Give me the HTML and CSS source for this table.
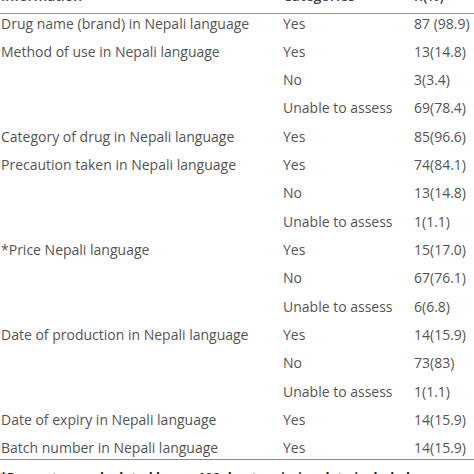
FILE: index.html
```html
<!DOCTYPE html>
<html>
<head>
<meta charset="utf-8">
<link rel="stylesheet" href="styles.css">
</head>
<body>
<div class="table">
  <div class="row head"><div class="c1">Information</div><div class="c2">Categories</div><div class="c3">n(%)</div></div>
  <div class="row"><div class="c1">Drug name (brand) in Nepali language</div><div class="c2">Yes</div><div class="c3">87 (98.9)</div></div>
  <div class="row"><div class="c1">Method of use in Nepali language</div><div class="c2">Yes</div><div class="c3">13(14.8)</div></div>
  <div class="row"><div class="c1"></div><div class="c2">No</div><div class="c3">3(3.4)</div></div>
  <div class="row"><div class="c1"></div><div class="c2">Unable to assess</div><div class="c3">69(78.4)</div></div>
  <div class="row"><div class="c1">Category of drug in Nepali language</div><div class="c2">Yes</div><div class="c3">85(96.6)</div></div>
  <div class="row"><div class="c1">Precaution taken in Nepali language</div><div class="c2">Yes</div><div class="c3">74(84.1)</div></div>
  <div class="row"><div class="c1"></div><div class="c2">No</div><div class="c3">13(14.8)</div></div>
  <div class="row"><div class="c1"></div><div class="c2">Unable to assess</div><div class="c3">1(1.1)</div></div>
  <div class="row"><div class="c1">*Price Nepali language</div><div class="c2">Yes</div><div class="c3">15(17.0)</div></div>
  <div class="row"><div class="c1"></div><div class="c2">No</div><div class="c3">67(76.1)</div></div>
  <div class="row"><div class="c1"></div><div class="c2">Unable to assess</div><div class="c3">6(6.8)</div></div>
  <div class="row"><div class="c1">Date of production in Nepali language</div><div class="c2">Yes</div><div class="c3">14(15.9)</div></div>
  <div class="row"><div class="c1"></div><div class="c2">No</div><div class="c3">73(83)</div></div>
  <div class="row"><div class="c1"></div><div class="c2">Unable to assess</div><div class="c3">1(1.1)</div></div>
  <div class="row"><div class="c1">Date of expiry in Nepali language</div><div class="c2">Yes</div><div class="c3">14(15.9)</div></div>
  <div class="row last"><div class="c1">Batch number in Nepali language</div><div class="c2">Yes</div><div class="c3">14(15.9)</div></div>
  <div class="note">*Percent are calculated by n = 100 due to missing data included</div>
</div>
</body>
</html>
```

FILE: styles.css
```css
html, body {
  margin: 0;
  padding: 0;
  background: #ffffff;
  overflow: hidden;
}
body {
  width: 474px;
  height: 474px;
  font-family: "Open Sans", "DejaVu Sans", sans-serif;
  font-size: 14px;
  color: #555555;
}
.table {
  margin-top: -14px;
  width: 480px;
}
.row {
  display: grid;
  grid-template-columns: 282px 132px 1fr;
  line-height: 19px;
  height: 28.33px;
  white-space: nowrap;
}
.row.head {
  height: 26.5px;
  border-bottom: 1.5px solid #9a9a9a;
  font-weight: 600;
  color: #444444;
}
.row.last {
  height: 20.5px;
  border-bottom: 1.5px solid #8a8a8a;
}
.c1 {
  padding-left: 1px;
}
.c2 {
  padding-left: 1px;
}
.note {
  padding-top: 8px;
  font-weight: 700;
  color: #222222;
  font-size: 13px;
  white-space: nowrap;
}
```
